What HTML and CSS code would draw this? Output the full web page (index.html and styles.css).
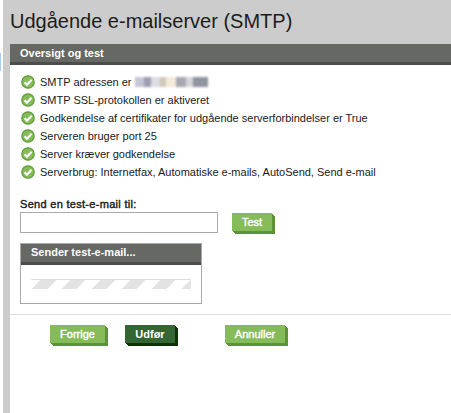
FILE: index.html
```html
<!DOCTYPE html>
<html lang="en">
<head>
    <meta charset="UTF-8">
    <title>Udgående e-mailserver (SMTP)</title>
    <link rel="stylesheet" href="styles.css">
</head>
<body>
    <div class="edge-mark"></div>
    <div class="page">
        <h1>Udgående e-mailserver (SMTP)</h1>
        <h2 class="section-head">Oversigt og test</h2>

        <ul class="checks">
            <li><svg class="ok" viewBox="0 0 14 14"><circle cx="7" cy="7" r="6.2" fill="#85bb59" stroke="#5c9a36" stroke-width="1.2"/><path d="M3.6 7.2l2.4 2.5 4.6-5" fill="none" stroke="#fff" stroke-width="2.2"/></svg>SMTP adressen er <span class="blurred"></span></li>
            <li><svg class="ok" viewBox="0 0 14 14"><circle cx="7" cy="7" r="6.2" fill="#85bb59" stroke="#5c9a36" stroke-width="1.2"/><path d="M3.6 7.2l2.4 2.5 4.6-5" fill="none" stroke="#fff" stroke-width="2.2"/></svg>SMTP SSL-protokollen er aktiveret</li>
            <li><svg class="ok" viewBox="0 0 14 14"><circle cx="7" cy="7" r="6.2" fill="#85bb59" stroke="#5c9a36" stroke-width="1.2"/><path d="M3.6 7.2l2.4 2.5 4.6-5" fill="none" stroke="#fff" stroke-width="2.2"/></svg>Godkendelse af certifikater for udgående serverforbindelser er True</li>
            <li><svg class="ok" viewBox="0 0 14 14"><circle cx="7" cy="7" r="6.2" fill="#85bb59" stroke="#5c9a36" stroke-width="1.2"/><path d="M3.6 7.2l2.4 2.5 4.6-5" fill="none" stroke="#fff" stroke-width="2.2"/></svg>Serveren bruger port 25</li>
            <li><svg class="ok" viewBox="0 0 14 14"><circle cx="7" cy="7" r="6.2" fill="#85bb59" stroke="#5c9a36" stroke-width="1.2"/><path d="M3.6 7.2l2.4 2.5 4.6-5" fill="none" stroke="#fff" stroke-width="2.2"/></svg>Server kræver godkendelse</li>
            <li><svg class="ok" viewBox="0 0 14 14"><circle cx="7" cy="7" r="6.2" fill="#85bb59" stroke="#5c9a36" stroke-width="1.2"/><path d="M3.6 7.2l2.4 2.5 4.6-5" fill="none" stroke="#fff" stroke-width="2.2"/></svg>Serverbrug: Internetfax, Automatiske e-mails, AutoSend, Send e-mail</li>
        </ul>

        <form class="test-form">
            <label for="testMail">Send en test-e-mail til:</label>
            <div class="test-row">
                <input type="text" id="testMail">
                <button type="button" class="btn">Test</button>
            </div>
        </form>

        <div class="progress-box">
            <div class="progress-head">Sender test-e-mail...</div>
            <div class="progress-body">
                <div class="progress-bar"></div>
            </div>
        </div>

        <div class="actions">
            <button type="button" class="btn btn-back">Forrige</button>
            <button type="button" class="btn btn-dark">Udfør</button>
            <button type="button" class="btn btn-cancel">Annuller</button>
        </div>
    </div>
</body>
</html>
```

FILE: styles.css
```css
* {
    box-sizing: border-box;
    margin: 0;
    padding: 0;
}

body {
    font-family: "Liberation Sans", Arial, sans-serif;
    font-size: 11px;
    color: #1a1a1a;
    background-color: white;
    overflow: hidden;
}

.edge-mark {
    position: absolute;
    left: 0;
    top: 53px;
    width: 1px;
    height: 18px;
    background-color: #a9cdee;
}

.page {
    margin-left: 3px;
    border-left: 7px solid #ccc;
    height: 413px;
}

h1 {
    height: 44px;
    padding-top: 9px;
    background-color: #ccc;
    font-size: 20px;
    font-weight: normal;
    line-height: 24px;
    color: #1c1c1c;
}

.section-head {
    height: 21px;
    padding-left: 10px;
    background-color: #666864;
    border-bottom: 3px solid #4c4c4a;
    font-size: 11px;
    line-height: 18px;
    color: white;
}

.checks {
    list-style: none;
    padding: 8px 0 0 11px;
}

.checks li {
    display: flex;
    align-items: center;
    height: 18px;
}

.ok {
    width: 14px;
    height: 14px;
    margin-right: 5px;
}

.blurred {
    width: 73px;
    height: 10px;
    margin-left: 3px;
    background: linear-gradient(90deg, #c4c8d4 0 12%, #9a9eb0 12% 22%, #dcdce2 22% 34%, #cfc8bb 34% 42%, #f3ead9 42% 56%, #a8a8b0 56% 70%, #d5d5db 70% 80%, #8f94a2 80% 100%);
    filter: blur(1px);
}

.test-form {
    padding: 16px 0 0 10px;
}

.test-form label {
    display: block;
    font-size: 11px;
    letter-spacing: 0.3px;
    -webkit-text-stroke: 0.4px #1a1a1a;
    line-height: 14px;
    margin-bottom: 1px;
}

.test-row {
    display: flex;
    align-items: flex-start;
}

.test-row input {
    width: 198px;
    height: 21px;
    border: 1px solid #aaa;
    margin-right: 14px;
}

.btn {
    height: 18px;
    padding: 0;
    border: none;
    background-color: #85bb59;
    box-shadow: 1px 1px 0 #5c9336, 2px 2px 0 #5c9336, 3px 3px 0 #5c9336;
    font-family: inherit;
    font-size: 11px;
    color: white;
    -webkit-text-stroke: 0.4px white;
}

.test-row .btn {
    width: 40px;
    margin-top: 1px;
}

.progress-box {
    width: 182px;
    height: 61px;
    margin: 10px 0 0 10px;
    border: 1px solid #aaa;
}

.progress-head {
    height: 21px;
    padding-left: 10px;
    background-color: #666864;
    border-bottom: 3px solid #4c4c4a;
    font-weight: bold;
    line-height: 17px;
    color: white;
}

.progress-body {
    padding: 14px 10px 0;
}

.progress-bar {
    height: 10px;
    border-top: 1px solid #ddd;
    background: repeating-linear-gradient(135deg, white 0 7.07px, #e3e3e3 7.07px 17.68px, white 17.68px 21.21px);
}

.actions {
    display: flex;
    align-items: flex-start;
    margin-top: 10px;
    padding: 10px 0 0 40px;
    border-top: 1px solid #ddd;
}

.btn-back {
    width: 55px;
}

.btn-dark {
    width: 50px;
    margin-left: 20px;
    background-color: #336633;
    box-shadow: 1px 1px 0 #0d3305, 2px 2px 0 #0d3305, 3px 3px 0 #0d3305;
    font-weight: bold;
    -webkit-text-stroke: 0;
}

.btn-cancel {
    width: 60px;
    margin-left: 50px;
}
```
